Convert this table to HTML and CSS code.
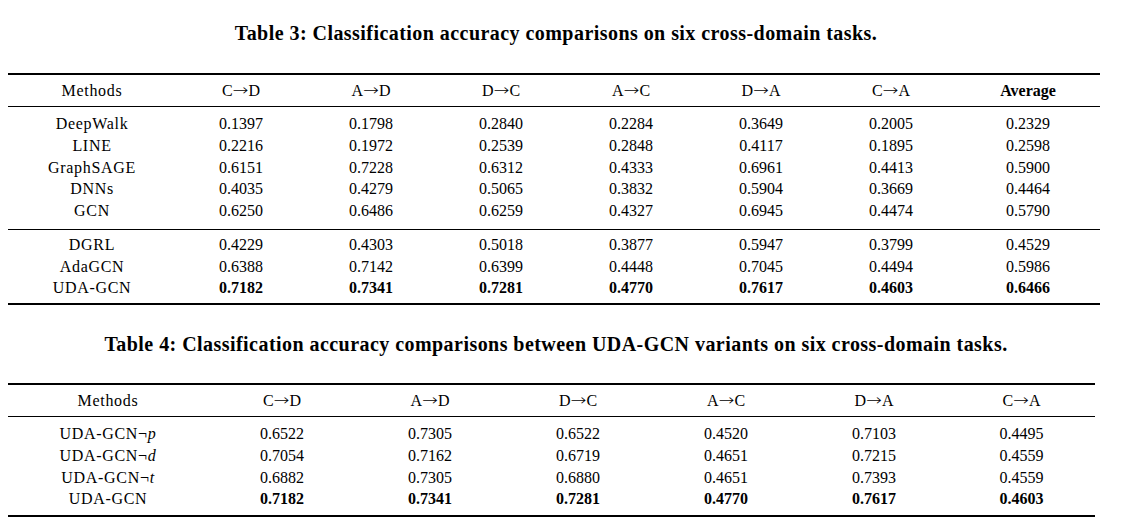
FILE: index.html
```html
<!DOCTYPE html>
<html>
<head>
<meta charset="utf-8">
<link rel="stylesheet" href="styles.css">
</head>
<body>
<div class="page">
  <div class="caption cap3">Table 3: Classification accuracy comparisons on six cross-domain tasks.</div>
  <table class="tbl t3">
    <colgroup>
      <col class="c3-first"><col class="c3"><col class="c3"><col class="c3"><col class="c3"><col class="c3"><col class="c3"><col class="c3-last">
    </colgroup>
    <thead>
      <tr><th class="name">Methods</th><th>C<span class="arr">→</span>D</th><th>A<span class="arr">→</span>D</th><th>D<span class="arr">→</span>C</th><th>A<span class="arr">→</span>C</th><th>D<span class="arr">→</span>A</th><th>C<span class="arr">→</span>A</th><th class="b">Average</th></tr>
    </thead>
    <tbody class="g1">
      <tr><td class="name">DeepWalk</td><td>0.1397</td><td>0.1798</td><td>0.2840</td><td>0.2284</td><td>0.3649</td><td>0.2005</td><td>0.2329</td></tr>
      <tr><td class="name">LINE</td><td>0.2216</td><td>0.1972</td><td>0.2539</td><td>0.2848</td><td>0.4117</td><td>0.1895</td><td>0.2598</td></tr>
      <tr><td class="name">GraphSAGE</td><td>0.6151</td><td>0.7228</td><td>0.6312</td><td>0.4333</td><td>0.6961</td><td>0.4413</td><td>0.5900</td></tr>
      <tr><td class="name">DNNs</td><td>0.4035</td><td>0.4279</td><td>0.5065</td><td>0.3832</td><td>0.5904</td><td>0.3669</td><td>0.4464</td></tr>
      <tr><td class="name">GCN</td><td>0.6250</td><td>0.6486</td><td>0.6259</td><td>0.4327</td><td>0.6945</td><td>0.4474</td><td>0.5790</td></tr>
    </tbody>
    <tbody class="g2">
      <tr><td class="name">DGRL</td><td>0.4229</td><td>0.4303</td><td>0.5018</td><td>0.3877</td><td>0.5947</td><td>0.3799</td><td>0.4529</td></tr>
      <tr><td class="name">AdaGCN</td><td>0.6388</td><td>0.7142</td><td>0.6399</td><td>0.4448</td><td>0.7045</td><td>0.4494</td><td>0.5986</td></tr>
      <tr><td class="name">UDA-GCN</td><td class="b">0.7182</td><td class="b">0.7341</td><td class="b">0.7281</td><td class="b">0.4770</td><td class="b">0.7617</td><td class="b">0.4603</td><td class="b">0.6466</td></tr>
    </tbody>
  </table>

  <div class="caption cap4">Table 4: Classification accuracy comparisons between UDA-GCN variants on six cross-domain tasks.</div>
  <table class="tbl t4">
    <colgroup>
      <col class="c4-first"><col class="c4"><col class="c4"><col class="c4"><col class="c4"><col class="c4"><col class="c4-last">
    </colgroup>
    <thead>
      <tr><th class="name">Methods</th><th>C<span class="arr">→</span>D</th><th>A<span class="arr">→</span>D</th><th>D<span class="arr">→</span>C</th><th>A<span class="arr">→</span>C</th><th>D<span class="arr">→</span>A</th><th>C<span class="arr">→</span>A</th></tr>
    </thead>
    <tbody class="g4">
      <tr><td class="name">UDA-GCN¬<i>p</i></td><td>0.6522</td><td>0.7305</td><td>0.6522</td><td>0.4520</td><td>0.7103</td><td>0.4495</td></tr>
      <tr><td class="name">UDA-GCN¬<i>d</i></td><td>0.7054</td><td>0.7162</td><td>0.6719</td><td>0.4651</td><td>0.7215</td><td>0.4559</td></tr>
      <tr><td class="name">UDA-GCN¬<i>t</i></td><td>0.6882</td><td>0.7305</td><td>0.6880</td><td>0.4651</td><td>0.7393</td><td>0.4559</td></tr>
      <tr><td class="name">UDA-GCN</td><td class="b">0.7182</td><td class="b">0.7341</td><td class="b">0.7281</td><td class="b">0.4770</td><td class="b">0.7617</td><td class="b">0.4603</td></tr>
    </tbody>
  </table>
</div>
</body>
</html>
```

FILE: styles.css
```css
html, body {
  margin: 0;
  padding: 0;
  background: #ffffff;
}

body {
  font-family: "Liberation Serif", "DejaVu Serif", serif;
  color: #000000;
}

.page {
  width: 1096px;
  margin-left: 8px;
  padding-top: 21px;
}

.caption {
  font-weight: bold;
  font-size: 20px;
  line-height: 24px;
  letter-spacing: 0.45px;
  text-align: center;
}

.cap3 {
  margin-bottom: 28px;
}

.cap4 {
  margin-top: 27px;
  margin-bottom: 27px;
}

.tbl {
  border-collapse: separate;
  border-spacing: 0;
  table-layout: fixed;
  font-size: 16px;
}

.t3 { width: 1092px; }
.t4 { width: 1087px; }

.c3-first { width: 168px; }
.c3 { width: 130px; }
.c3-last { width: 144px; }

.c4-first { width: 200px; }
.c4 { width: 148px; }
.c4-last { width: 147px; }

.tbl th,
.tbl td {
  padding: 0;
  text-align: center;
  white-space: nowrap;
}

.tbl th {
  font-weight: normal;
  height: 31px;
  line-height: 31px;
  border-top: 2px solid #000;
  border-bottom: 1px solid #000;
}

.tbl td {
  line-height: 21.75px;
}

.tbl .name {
  letter-spacing: 0.7px;
}

.tbl .b {
  font-weight: bold;
}

.arr {
  font-family: "DejaVu Sans", serif;
  font-weight: 200;
  font-size: 19px;
  line-height: 0;
  display: inline-block;
  transform: scaleY(0.8);
}

.g1 tr:first-child td { padding-top: 6px; }
.g1 tr:last-child td { padding-bottom: 7px; border-bottom: 1px solid #000; }

.g2 tr:first-child td { padding-top: 4px; }
.g2 tr:last-child td { padding-bottom: 4px; border-bottom: 2px solid #000; }

.g4 tr:first-child td { padding-top: 6px; }
.g4 tr:last-child td { padding-bottom: 5px; border-bottom: 2px solid #000; }

.tbl i {
  font-style: italic;
}
```
